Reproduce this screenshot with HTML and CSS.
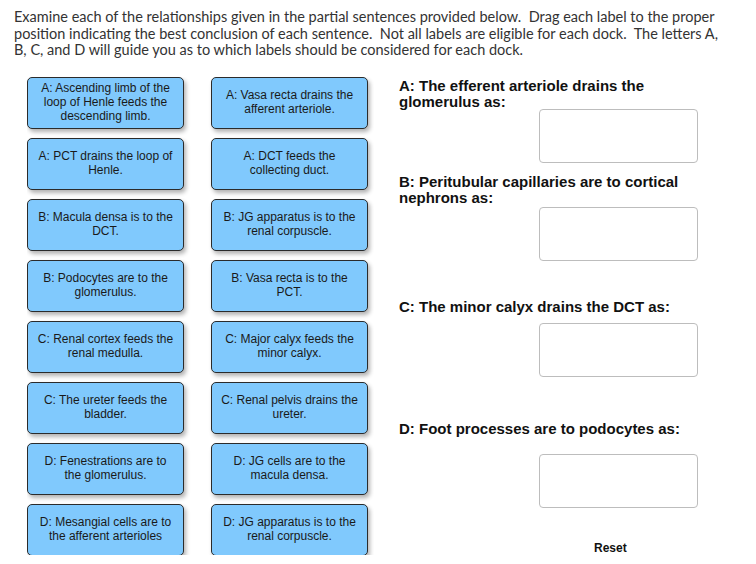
FILE: index.html
```html
<!DOCTYPE html>
<html lang="en">
<head>
    <meta charset="UTF-8" />
    <title>Drag and Drop: Renal Relationships</title>
    <link rel="stylesheet" href="styles.css">
</head>
<body>
    <p class="instructions">
        Examine each of the relationships given in the partial sentences provided below.&nbsp; Drag each label to the proper<br>
        position indicating the best conclusion of each sentence.&nbsp; Not all labels are eligible for each dock.&nbsp; The letters A,<br>
        B, C, and D will guide you as to which labels should be considered for each dock.
    </p>

    <div class="workspace">
        <div class="labels">
            <div class="label">A: Ascending limb of the loop of Henle feeds the descending limb.</div>
            <div class="label">A: Vasa recta drains the afferent arteriole.</div>
            <div class="label">A: PCT drains the loop of Henle.</div>
            <div class="label">A: DCT feeds the collecting duct.</div>
            <div class="label">B: Macula densa is to the DCT.</div>
            <div class="label">B: JG apparatus is to the renal corpuscle.</div>
            <div class="label">B: Podocytes are to the glomerulus.</div>
            <div class="label">B: Vasa recta is to the PCT.</div>
            <div class="label">C: Renal cortex feeds the renal medulla.</div>
            <div class="label">C: Major calyx feeds the minor calyx.</div>
            <div class="label">C: The ureter feeds the bladder.</div>
            <div class="label">C: Renal pelvis drains the ureter.</div>
            <div class="label">D: Fenestrations are to the glomerulus.</div>
            <div class="label">D: JG cells are to the macula densa.</div>
            <div class="label">D: Mesangial cells are to the afferent arterioles</div>
            <div class="label">D: JG apparatus is to the renal corpuscle.</div>
        </div>

        <div class="docks">
            <div class="dock-group dock-a">
                <h3>A: The efferent arteriole drains the glomerulus as:</h3>
                <div class="dock"></div>
            </div>
            <div class="dock-group dock-b">
                <h3>B: Peritubular capillaries are to cortical nephrons as:</h3>
                <div class="dock"></div>
            </div>
            <div class="dock-group dock-c">
                <h3>C: The minor calyx drains the DCT as:</h3>
                <div class="dock"></div>
            </div>
            <div class="dock-group dock-d">
                <h3>D: Foot processes are to podocytes as:</h3>
                <div class="dock"></div>
            </div>
            <button class="reset-button">Reset</button>
        </div>
    </div>
</body>
</html>
```

FILE: styles.css
```css
/* Page */
body {
    margin: 0;
    padding: 9px 14px 0 14px;
    background: #ffffff;
    font-family: 'Liberation Sans', Arial, sans-serif;
    color: #111;
}

.instructions {
    margin: 0;
    font-family: 'Lato', 'Liberation Sans', sans-serif;
    font-size: 14.5px;
    line-height: 16.5px;
    color: #333;
}

/* Main area: labels on the left, docks on the right */
.workspace {
    display: flex;
    margin-top: 18px;
    margin-left: 13px;
}

.labels {
    display: grid;
    grid-template-columns: 157px 157px;
    grid-auto-rows: 52px;
    column-gap: 27px;
    row-gap: 9px;
    height: 478px;
    width: 341px;
    padding-right: 6px;
    overflow: hidden;
    align-content: start;
}

.label {
    box-sizing: border-box;
    display: flex;
    align-items: center;
    justify-content: center;
    text-align: center;
    padding: 0 9px 2px 9px;
    background-color: #80c9fd;
    border: 1px solid #2b2b2b;
    border-radius: 5px;
    box-shadow: 2px 3px 4px rgba(0, 0, 0, 0.3);
    font-size: 12px;
    line-height: 14px;
    color: #1a1a1a;
}

/* Docks */
.docks {
    margin-left: 25px;
    width: 320px;
    display: flex;
    flex-direction: column;
}

.dock-group h3 {
    margin: 0;
    font-size: 15px;
    line-height: 16px;
    font-weight: 700;
    color: #111;
}

.dock {
    box-sizing: border-box;
    width: 159px;
    height: 54px;
    margin-left: 140px;
    border: 1px solid #bdbdbd;
    border-radius: 4px;
    background: #fff;
}

.dock-a { margin-top: 1px; }
.dock-a .dock { margin-top: -1px; }

.dock-b { margin-top: 11px; }
.dock-b .dock { margin-top: 1px; }

.dock-c { margin-top: 38px; }
.dock-c .dock { margin-top: 8px; }

.dock-d { margin-top: 44px; }
.dock-d .dock { margin-top: 17px; }

.reset-button {
    align-self: flex-start;
    margin: 33px 0 0 195px;
    padding: 0;
    border: none;
    background: none;
    font-family: 'Liberation Sans', Arial, sans-serif;
    font-size: 12px;
    line-height: 15px;
    font-weight: 700;
    color: #111;
    cursor: pointer;
}
```
